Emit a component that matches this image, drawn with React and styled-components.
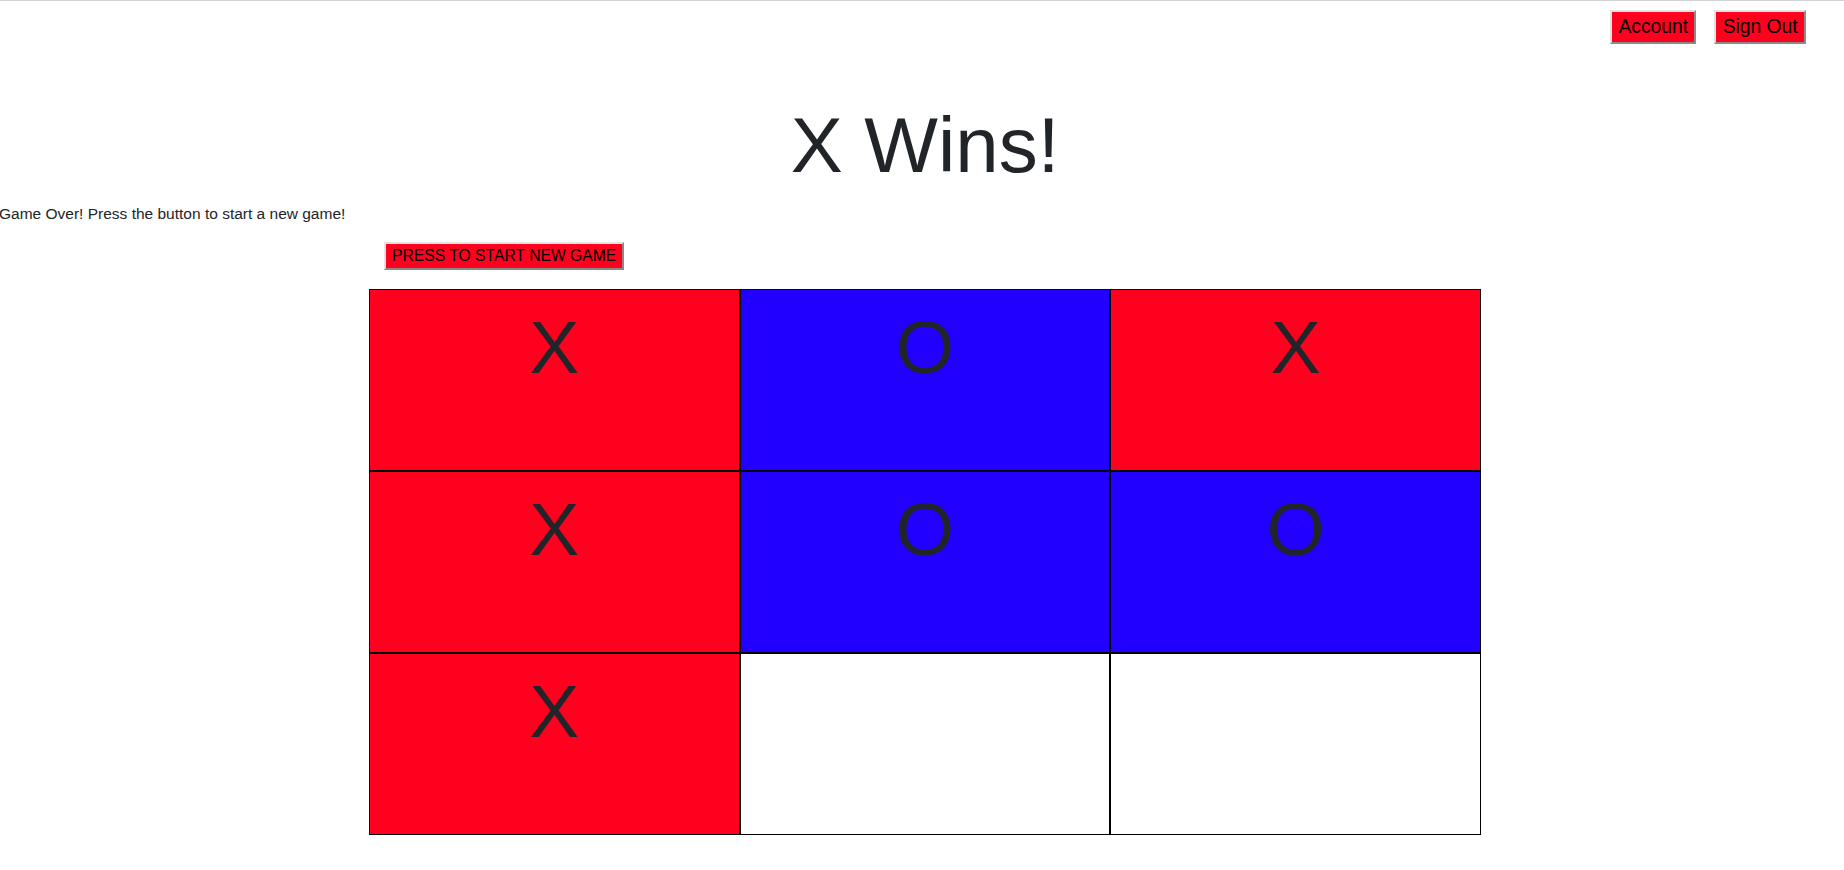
import React from "react";
import styled, { createGlobalStyle } from "styled-components";

const RED = "#ff001e";
const BLUE = "#2200ff";
const INK = "#212529";

const GlobalStyle = createGlobalStyle`
    html, body {
        margin: 0;
        padding: 0;
        background: #fff;
    }
    body {
        font-family: "Liberation Sans", Arial, sans-serif;
        color: ${INK};
    }
`;

const Page = styled.div`
    border-top: 1px solid #d2d2d2;
    min-height: 869px;
`;

const Header = styled.header`
    display: flex;
    justify-content: flex-end;
    gap: 18px;
    padding: 9px 38px 0 0;
`;

const RedButton = styled.button`
    font-family: "Liberation Sans", Arial, sans-serif;
    font-size: ${p => (p.$big ? 19.3 : 15.7)}px;
    line-height: normal;
    color: #000;
    background: ${RED};
    padding: ${p => (p.$big ? "4.2px 6.3px" : "3px 6px")};
    border: 2px solid;
    border-color: #e3e3e3 #8a8a8a #8a8a8a #e3e3e3;
    border-radius: 0;
    cursor: pointer;
`;

const Main = styled.main`
    padding-left: 6px;
`;

const Title = styled.h1`
    margin: 55px 0 9.5px;
    font-size: 78px;
    font-weight: 400;
    line-height: 1.2;
    text-align: center;
`;

const Message = styled.p`
    margin: 0 0 0 -7px;
    font-size: 15.5px;
    line-height: 1.5;
`;

const BoardArea = styled.section`
    width: fit-content;
    margin: 16.5px auto 0;
`;

const Controls = styled.div`
    padding-left: 15px;
    margin-bottom: 18.3px;
`;

const Board = styled.div`
    display: grid;
    grid-template-columns: repeat(3, 370.7px);
    grid-auto-rows: 182.3px;
`;

const Cell = styled.div`
    border: 1px solid #000;
    background: ${p => (p.$mark === "X" ? RED : p.$mark === "O" ? BLUE : "#fff")};
    color: ${INK};
    font-size: 75px;
    line-height: 1.5;
    padding-top: 1px;
    text-align: center;
`;

const board = ["X", "O", "X", "X", "O", "O", "X", "", ""];

const App = () => {
    return (
        <Page>
            <GlobalStyle />
            <Header>
                <RedButton $big>Account</RedButton>
                <RedButton $big>Sign Out</RedButton>
            </Header>
            <Main>
                <Title>X Wins!</Title>
                <Message>Game Over! Press the button to start a new game!</Message>
                <BoardArea>
                    <Controls>
                        <RedButton>PRESS TO START NEW GAME</RedButton>
                    </Controls>
                    <Board>
                        {board.map((mark, i) => (
                            <Cell key={i} $mark={mark}>{mark}</Cell>
                        ))}
                    </Board>
                </BoardArea>
            </Main>
        </Page>
    );
};

export default App;
